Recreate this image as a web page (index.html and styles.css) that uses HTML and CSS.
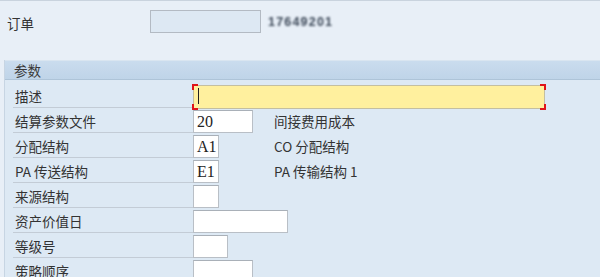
FILE: index.html
```html
<!DOCTYPE html>
<html lang="zh">
<head>
  <meta charset="UTF-8">
  <title>参数</title>
  <link rel="stylesheet" href="styles.css">
</head>
<body>
  <div class="top">
    <span class="top-label">订单</span>
    <span class="ro-field"></span>
    <span class="masked">17649201</span>
  </div>

  <section class="panel">
    <div class="panel-head">参数</div>
    <div class="rows">
      <div class="row first">
        <span class="lbl">描述</span>
        <span class="inp focus"><span class="caret"></span></span>
      </div>
      <div class="row">
        <span class="lbl">结算参数文件</span>
        <span class="slot"><span class="inp w59">20</span></span>
        <span class="desc">间接费用成本</span>
      </div>
      <div class="row">
        <span class="lbl">分配结构</span>
        <span class="slot"><span class="inp w25">A1</span></span>
        <span class="desc">CO 分配结构</span>
      </div>
      <div class="row">
        <span class="lbl">PA 传送结构</span>
        <span class="slot"><span class="inp w25">E1</span></span>
        <span class="desc">PA 传输结构 1</span>
      </div>
      <div class="row">
        <span class="lbl">来源结构</span>
        <span class="inp w25"></span>
      </div>
      <div class="row">
        <span class="lbl">资产价值日</span>
        <span class="inp w94"></span>
      </div>
      <div class="row">
        <span class="lbl">等级号</span>
        <span class="inp w34"></span>
      </div>
      <div class="row">
        <span class="lbl">策略顺序</span>
        <span class="inp w59"></span>
      </div>
    </div>
  </section>
</body>
</html>
```

FILE: styles.css
```css
body {
  margin: 0;
  background: #e8eff7;
  color: #333;
  font-family: "Noto Sans CJK SC", "Noto Sans", sans-serif;
  font-size: 13.5px;
  overflow: hidden;
}
.top {
  height: 59px;
  border-top: 1px solid #c9d3de;
  display: flex;
  align-items: flex-start;
}
.top-label {
  margin: 12px 0 0 7px;
  width: 143px;
  line-height: 20px;
}
.ro-field {
  margin-top: 9px;
  width: 109px;
  height: 21px;
  background: #dde8f3;
  border: 1px solid #b3bac3;
}
.masked {
  margin: 14px 0 0 7px;
  font-family: "Liberation Sans", sans-serif;
  font-weight: bold;
  font-size: 12.5px;
  letter-spacing: 1.2px;
  color: #3a4656;
  filter: blur(0.8px);
}
.panel {
  margin-left: 4px;
  border-left: 1px solid #c7d5e3;
  background: #dde9f4;
  min-height: 220px;
}
.panel-head {
  height: 18px;
  padding-left: 9px;
  line-height: 18px;
  border-top: 1px solid #d9e5f0;
  border-bottom: 1px solid #aec4d8;
  background: linear-gradient(#cadcee, #bfd4e8);
  color: #3a3a3a;
}
.rows {
  padding-left: 8px;
}
.row {
  display: flex;
  align-items: flex-end;
  height: 25px;
}
.row.first {
  height: 28px;
}
.lbl {
  width: 178px;
  padding-left: 2px;
  flex: none;
  line-height: 21px;
  border-bottom: 1px solid #c3ccd6;
  white-space: nowrap;
}
.slot {
  width: 81px;
  flex: none;
  display: flex;
}
.inp {
  box-sizing: border-box;
  height: 23px;
  background: #fff;
  border: 1px solid #b9bfc6;
  border-top-color: #a9b0b8;
  font-family: "Liberation Serif", serif;
  font-size: 16px;
  color: #222;
  line-height: 21px;
  padding-left: 3px;
  flex: none;
}
.w25 { width: 26px; }
.w34 { width: 35px; }
.w59 { width: 60px; }
.w94 { width: 95px; }
.inp.focus {
  position: relative;
  width: 352px;
  height: 24px;
  margin-bottom: -1px;
  background: #fff09e;
  border-color: #c4bfa0;
}
/* red corner brackets around the focused field */
.inp.focus::before {
  content: "";
  position: absolute;
  inset: -2px;
  background:
    linear-gradient(#e0141a, #e0141a) left top / 6px 2px no-repeat,
    linear-gradient(#e0141a, #e0141a) left top / 2px 6px no-repeat,
    linear-gradient(#e0141a, #e0141a) left bottom / 6px 2px no-repeat,
    linear-gradient(#e0141a, #e0141a) left bottom / 2px 6px no-repeat,
    linear-gradient(#e0141a, #e0141a) right top / 6px 2px no-repeat,
    linear-gradient(#e0141a, #e0141a) right top / 2px 6px no-repeat,
    linear-gradient(#e0141a, #e0141a) right bottom / 6px 2px no-repeat,
    linear-gradient(#e0141a, #e0141a) right bottom / 2px 6px no-repeat;
}
.caret {
  position: absolute;
  left: 4px;
  top: 2px;
  width: 1px;
  height: 16px;
  background: #222;
}
.desc {
  line-height: 21px;
  padding-bottom: 1px;
  white-space: nowrap;
}
```
